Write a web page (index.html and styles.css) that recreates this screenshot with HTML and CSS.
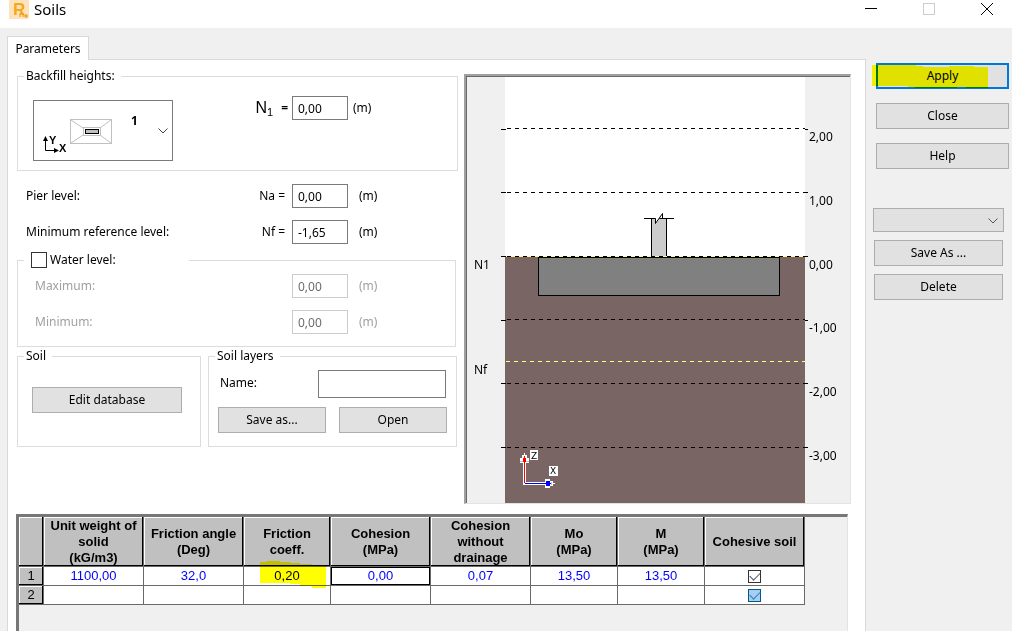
FILE: index.html
```html
<!DOCTYPE html>
<html lang="en">
<head>
    <meta charset="utf-8">
    <meta name="viewport" content="width=device-width, initial-scale=1.0">
    <title>Soils</title>
    <link rel="stylesheet" href="styles.css">
</head>
<body>
    <div class="titlebar">
        <svg class="logo" width="20" height="20" viewBox="0 0 20 20">
            <rect width="20" height="19" fill="#fde3bd"/>
            <text x="4" y="15" class="logo-r">R</text>
            <path d="M11 13v4M11 14h2M14 17v-3M16 15h2v2h-2z" fill="none" stroke="#f08c00"/>
        </svg>
        <div class="caption">Soils</div>
        <div class="win-buttons">
            <button aria-label="Minimize"><svg width="12" height="12"><path d="M0 5.500H12" stroke="#000"/></svg></button>
            <button aria-label="Maximize" disabled><svg width="12" height="12"><rect x="0.5" y="0.5" width="11" height="11" fill="none" stroke="#ccc"/></svg></button>
            <button aria-label="Close"><svg width="12" height="12"><path d="M0 0L12 12M12 0L0 12" stroke="#000"/></svg></button>
        </div>
    </div>
    <div class="window">
        <div class="main">
            <div class="tabs"><button class="tab">Parameters</button></div>
            <div class="panel">
                <div class="top">
                    <form class="settings">
                        <fieldset class="backfill">
                            <legend>Backfill heights:</legend>
                            <div class="backfill-body">
                                <div class="scheme">
                                    <select aria-label="Backfill scheme"><option>1</option></select>
                                    <svg class="scheme-pic" width="138" height="59" viewBox="0 0 138 59">
                                        <g fill="none" stroke="#c0c0c0">
                                            <rect x="36.5" y="18.5" width="41" height="24"/>
                                            <rect x="49.5" y="26.5" width="17" height="8"/>
                                            <path d="M37 19L49 27M77 19L66 27M37 42L49 34M77 42L66 34"/>
                                        </g>
                                        <rect x="51.5" y="28.5" width="13" height="4" fill="#c0c0c0" stroke="#000"/>
                                        <path d="M11.5 38V49.5H22" fill="none" stroke="#000"/>
                                        <path d="M11.5 35L14 40H9zM25 49.5L20 47V52z"/>
                                        <text x="15" y="43">Y</text>
                                        <text x="25" y="51">X</text>
                                        <path d="M124.500 27.500L129 32L133.500 27.500" fill="none" stroke="#444"/>
                                    </svg>
                                </div>
                                <label class="sym" for="n1"><span class="n-big">N</span><sub>1</sub><b>=</b></label>
                                <input type="text" id="n1" value="0,00">
                                <span class="unit near">(m)</span>
                            </div>
                        </fieldset>
                        <div class="row first">
                            <label for="na"><span>Pier level:</span><span>Na =</span></label>
                            <input type="text" id="na" value="0,00">
                            <span class="unit">(m)</span>
                        </div>
                        <div class="row">
                            <label for="nf"><span>Minimum reference level:</span><span>Nf =</span></label>
                            <input type="text" id="nf" value="-1,65">
                            <span class="unit">(m)</span>
                        </div>
                        <fieldset class="water">
                            <legend><input type="checkbox" id="water"><label for="water">Water level:</label></legend>
                            <div class="row off">
                                <label for="max">Maximum:</label>
                                <input type="text" id="max" value="0,00" disabled>
                                <span class="unit">(m)</span>
                            </div>
                            <div class="row off">
                                <label for="min">Minimum:</label>
                                <input type="text" id="min" value="0,00" disabled>
                                <span class="unit">(m)</span>
                            </div>
                        </fieldset>
                        <div class="soil-groups">
                            <fieldset class="soil">
                                <legend>Soil</legend>
                                <button type="button" class="btn">Edit database</button>
                            </fieldset>
                            <fieldset class="layers">
                                <legend>Soil layers</legend>
                                <div class="name-row">
                                    <label for="name">Name:</label>
                                    <input type="text" id="name">
                                </div>
                                <div class="layer-buttons">
                                    <button type="button" class="btn">Save as...</button>
                                    <button type="button" class="btn">Open</button>
                                </div>
                            </fieldset>
                        </div>
                    </form>
                    <div class="preview">
                        <svg viewBox="0 0 384 427">
                            <rect x="39" width="300" height="180" fill="#fff"/>
                            <rect x="39" y="180" width="300" height="247" fill="#7a6565"/>
                            <path d="M0 0.500H384M0.500 0V427" stroke="#696969"/>
                            <!-- pier and footing -->
                            <rect x="185.500" y="142.500" width="15" height="39" fill="#ccc" stroke="#000"/>
                            <path d="M189 142L190 148L196 138V142z" fill="#fff"/>
                            <path d="M178 142.500H189.500V147.500L196.500 137.500V142.500H208" fill="none" stroke="#000"/>
                            <rect x="72.500" y="181.500" width="241" height="38" fill="#808080" stroke="#000"/>
                            <!-- level lines -->
                            <path d="M39 180.500H339" stroke="#ffff80"/>
                            <path class="dash" d="M41 52.500H339M41 116.500H339M41 180.500H339M41 243.500H339M41 307.500H339M41 371.500H339"/>
                            <path d="M40 285.500H339" class="dash nf"/>
                            <path d="M35 53.500h5M35 116.500h5M35 180.500h5M35 244.500h5M35 307.500h5M35 371.500h5M339 53.500h3M339 116.500h3M339 180.500h3M339 244.500h3M339 307.500h3M339 371.500h3" stroke="#000"/>
                            <text x="8" y="193">N1</text>
                            <text x="8" y="298">Nf</text>
                            <text x="343" y="65">2,00</text>
                            <text x="343" y="129">1,00</text>
                            <text x="343" y="193">0,00</text>
                            <text x="343" y="256">-1,00</text>
                            <text x="343" y="320">-2,00</text>
                            <text x="343" y="384">-3,00</text>
                            <!-- axes -->
                            <path d="M58.500 380V407.500H84" fill="none" stroke="#fff" stroke-width="3"/>
                            <path d="M58 377h1v2h2v3h2v5h-9v-5h2v-3h2zM89 407v1h-2v2h-3v2h-5v-9h5v2h3v2z" fill="#fff"/>
                            <path d="M54 385.500h9M85.500 406v3" stroke="#c0c0c0"/>
                            <path d="M58.500 380V407" stroke="#f00"/>
                            <path d="M57 382h3v4h-3z" fill="#f00"/>
                            <path d="M59 407.500H85" stroke="#00f"/>
                            <path d="M80 405h4v5h-4z" fill="#00f"/>
                            <rect x="64" y="374" width="8" height="10" fill="#fff"/>
                            <rect x="83" y="390" width="9" height="10" fill="#fff"/>
                            <text x="65" y="383" class="axis">Z</text>
                            <text x="84" y="398" class="axis">X</text>
                        </svg>
                    </div>
                </div>
                <div class="grid">
                    <table>
                        <colgroup>
                            <col class="c-num"><col class="c-wide"><col class="c-wide"><col class="c-mid"><col class="c-wide"><col class="c-wide"><col class="c-mid"><col class="c-mid"><col class="c-wide">
                        </colgroup>
                        <thead>
                            <tr>
                                <th></th>
                                <th>Unit weight of<br>solid<br>(kG/m3)</th>
                                <th>Friction angle<br>(Deg)</th>
                                <th>Friction<br>coeff.</th>
                                <th>Cohesion<br>(MPa)</th>
                                <th>Cohesion<br>without<br>drainage</th>
                                <th>Mo<br>(MPa)</th>
                                <th>M<br>(MPa)</th>
                                <th>Cohesive soil</th>
                            </tr>
                        </thead>
                        <tbody>
                            <tr>
                                <th>1</th>
                                <td>1100,00</td>
                                <td>32,0</td>
                                <td class="marked">0,20
                                    <svg class="marker" width="66" height="28"><path d="M0 1H6V0H20V1H30V2H40V3H52V5H66V27H52V25H40V23H30V22H0z" fill="#ff0"/></svg>
                                </td>
                                <td class="current">0,00</td>
                                <td>0,07</td>
                                <td>13,50</td>
                                <td>13,50</td>
                                <td><input type="checkbox" aria-label="Cohesive soil 1" checked></td>
                            </tr>
                            <tr>
                                <th>2</th>
                                <td></td><td></td><td></td><td></td><td></td><td></td><td></td>
                                <td><input type="checkbox" class="hot" aria-label="Cohesive soil 2" checked></td>
                            </tr>
                        </tbody>
                    </table>
                </div>
            </div>
        </div>
        <div class="side">
            <div class="actions">
                <div class="apply">
                    <button class="btn default">Apply</button>
                    <svg class="marker" width="116" height="23"><path d="M0 0H44V1H51V2H77V1H102V2H116V23H94V22H85V23H43V22H36V21H0z" fill="#ff0"/></svg>
                </div>
                <button class="btn">Close</button>
                <button class="btn">Help</button>
            </div>
            <div class="presets">
                <div class="preset">
                    <select aria-label="Saved soils"><option></option></select>
                    <svg width="10" height="6"><path d="M0.500 0.500L5 5L9.500 0.500" fill="none" stroke="#555"/></svg>
                </div>
                <button class="btn">Save As ...</button>
                <button class="btn">Delete</button>
            </div>
        </div>
    </div>
</body>
</html>
```
FILE: styles.css
```css
*{
    box-sizing: border-box;
}
body{
    margin: 0;
    height: 100vh;
    display: flex;
    flex-direction: column;
    overflow: hidden;
    background-color: #f0f0f0;
    color: #000;
    font: 12px/14px "Noto Sans", sans-serif;
}
button,input,select{
    font: inherit;
    color: inherit;
    margin: 0;
}
svg{
    display: block;
}
.titlebar{
    flex: none;
    display: flex;
    align-items: flex-start;
    height: 28px;
    padding-left: 9px;
    background-color: #fff;
}
.logo-r{
    font: bold 17px "Liberation Sans", sans-serif;
    fill: #f5a81c;
}
.caption{
    margin-left: 5px;
    font: 15px/18px "Noto Sans", sans-serif;
}
.win-buttons{
    display: flex;
    margin-left: auto;
    padding: 3px 19px 0 0;
    gap: 46px;
}
.win-buttons button{
    border: none;
    padding: 0;
    background: none;
}
.window{
    flex: 1;
    display: flex;
    min-height: 0;
}
.main{
    flex: 1;
    min-width: 0;
    display: flex;
    flex-direction: column;
    padding: 8px 0 0 7px;
}
.tabs{
    display: flex;
    height: 23px;
}
.tab{
    position: relative;
    width: 82px;
    height: 24px;
    padding: 0;
    border: 1px solid #d9d9d9;
    border-bottom: none;
    background-color: #fff;
}
.panel{
    flex: 1;
    min-height: 0;
    display: flex;
    flex-direction: column;
    padding: 9px 14px 0 9px;
    border: 1px solid #d9d9d9;
    border-bottom: none;
    background-color: #fff;
}
.top{
    flex: none;
    display: flex;
    align-items: flex-start;
    gap: 6px;
}
.settings{
    flex: none;
    width: 441px;
}
fieldset{
    min-width: 0;
    margin: 0;
    padding: 0;
    border: 1px solid #dcdcdc;
}
legend{
    margin-left: 6px;
    padding: 0 6px 0 2px;
}
input[type="text"]{
    min-width: 0;
    height: 24px;
    padding: 0 5px;
    border: 1px solid #7a7a7a;
    background-color: #fff;
}
input[type="text"]:disabled{
    border-color: #ccc;
    color: #6d6d6d;
}
.backfill{
    height: 102px;
}
.backfill-body{
    display: grid;
    grid-template-columns: 155px 119px 56px 1fr;
    padding-top: 13px;
}
.scheme{
    position: relative;
    width: 140px;
    margin: 4px 0 0 15px;
}
.scheme select{
    appearance: none;
    display: block;
    width: 100%;
    height: 61px;
    padding: 0 0 20px 97px;
    border: 1px solid #7a7a7a;
    border-radius: 0;
    background-color: #fff;
    font-weight: bold;
}
.scheme-pic{
    position: absolute;
    left: 1px;
    top: 1px;
    pointer-events: none;
}
.scheme-pic text{
    font: bold 11px "Liberation Sans", sans-serif;
}
.sym{
    display: flex;
    align-items: center;
    justify-content: flex-end;
    height: 24px;
    padding-right: 4px;
}
.n-big{
    font: 16px/24px "Liberation Sans", sans-serif;
}
.sym sub{
    margin: 8px 8px 0 0;
    font: 11px/12px "Liberation Sans", sans-serif;
}
.unit{
    padding-left: 11px;
    line-height: 24px;
}
.near{
    padding-left: 5px;
}
.row{
    display: grid;
    grid-template-columns: 275px 56px 1fr;
    align-items: center;
    margin-top: 12px;
}
.row.first{
    margin-top: 13px;
}
.row label{
    display: flex;
    justify-content: space-between;
    padding: 0 7px 0 9px;
}
.water{
    width: 439px;
    height: 95px;
    margin-top: 8px;
}
.water legend{
    display: flex;
    align-items: center;
    width: 165px;
    height: 16px;
    padding: 0 0 0 7px;
    gap: 3px;
}
.water .row{
    grid-template-columns: 274px 56px 1fr;
}
.water .row:nth-of-type(1){
    margin-top: 6px;
}
.off{
    color: #a0a0a0;
}
.off label{
    padding-left: 17px;
}
input[type="checkbox"]{
    appearance: none;
    display: grid;
    place-items: center;
    width: 13px;
    height: 13px;
    border: 1px solid #333;
    background-color: #fff;
}
.water input[type="checkbox"]{
    width: 16px;
    height: 16px;
}
td input:checked::after{
    content: "";
    width: 9px;
    height: 5px;
    margin-top: -3px;
    border: solid #556;
    border-width: 0 0 1px 1px;
    transform: rotate(-45deg);
}
td input.hot{
    border-color: #005a86;
    background-color: #a8cdf2;
}
td input.hot:checked::after{
    border-color: #2b7fc0;
}
.soil-groups{
    display: flex;
    gap: 7px;
    margin-top: 2px;
}
.soil{
    width: 184px;
    height: 98px;
}
.layers{
    width: 249px;
    height: 98px;
}
.btn{
    height: 26px;
    padding: 0;
    border: 1px solid #adadad;
    background-color: #e1e1e1;
}
.soil .btn{
    display: block;
    width: 150px;
    margin: 24px 0 0 14px;
}
.name-row{
    display: flex;
    justify-content: space-between;
    margin-top: 7px;
    padding: 0 10px 0 11px;
}
.name-row label{
    line-height: 26px;
}
.name-row input[type="text"]{
    width: 128px;
    height: 28px;
}
.layer-buttons{
    display: flex;
    gap: 13px;
    margin-top: 9px;
    padding: 0 9px;
}
.layer-buttons .btn{
    flex: 1;
}
.preview{
    flex: 1;
    min-width: 0;
    margin-top: 5px;
    border-style: solid;
    border-width: 2px 1px 1px 2px;
    border-color: #a0a0a0 #e3e3e3 #e3e3e3 #a0a0a0;
    background-color: #f0f0f0;
}
.preview svg{
    width: 100%;
    height: auto;
}
.dash{
    stroke: #000;
    stroke-dasharray: 4 4;
}
.nf{
    stroke: #ffff80;
}
.preview .axis{
    font: 9px "DejaVu Sans", sans-serif;
}
.grid{
    flex: 1;
    min-height: 0;
    margin: 10px 3px 0 -1px;
    border-style: solid;
    border-width: 3px 1px 0 3px;
    border-color: #777 #e3e3e3 #e3e3e3 #777;
    background-color: #f0f0f0;
}
table{
    table-layout: fixed;
    width: 786px;
    border-collapse: separate;
    border-spacing: 0;
    font: 13px/16px "Liberation Sans", sans-serif;
    text-align: center;
}
.c-num{
    width: 25px;
}
.c-wide{
    width: 100px;
}
.c-mid{
    width: 87px;
}
th,td{
    height: 19px;
    padding: 0;
    border: solid #696969;
    border-width: 0 1px 1px 0;
}
th{
    background-color: #c0c0c0;
    box-shadow: inset -1px -1px #000, inset 1px 1px #fff;
    font-weight: normal;
    white-space: nowrap;
}
thead th{
    height: 50px;
    font-weight: bold;
}
td{
    background-color: #fff;
    color: #00f;
}
td input[type="checkbox"]{
    margin: 0 auto;
}
.current{
    box-shadow: inset 0 0 0 1px #000;
}
.marked,.apply{
    position: relative;
}
.marker{
    position: absolute;
    mix-blend-mode: multiply;
    pointer-events: none;
}
.marked .marker{
    left: 16px;
    top: -6px;
}
.apply .marker{
    left: -4px;
    top: 2px;
}
.side{
    flex: none;
    width: 146px;
    padding: 35px 3px 0 10px;
}
.actions{
    display: grid;
    gap: 14px;
}
.apply .btn{
    display: block;
    width: 100%;
}
.default{
    border: 2px solid #0078d7;
}
.presets{
    display: grid;
    gap: 8px;
    margin: 39px 5px 0 -3px;
}
.presets .btn{
    margin: 0 1px;
}
.preset{
    position: relative;
}
.preset select{
    appearance: none;
    display: block;
    width: 100%;
    height: 24px;
    border: 1px solid #adadad;
    border-radius: 0;
    background-color: #e1e1e1;
}
.preset svg{
    position: absolute;
    right: 6px;
    top: 10px;
    pointer-events: none;
}
```
